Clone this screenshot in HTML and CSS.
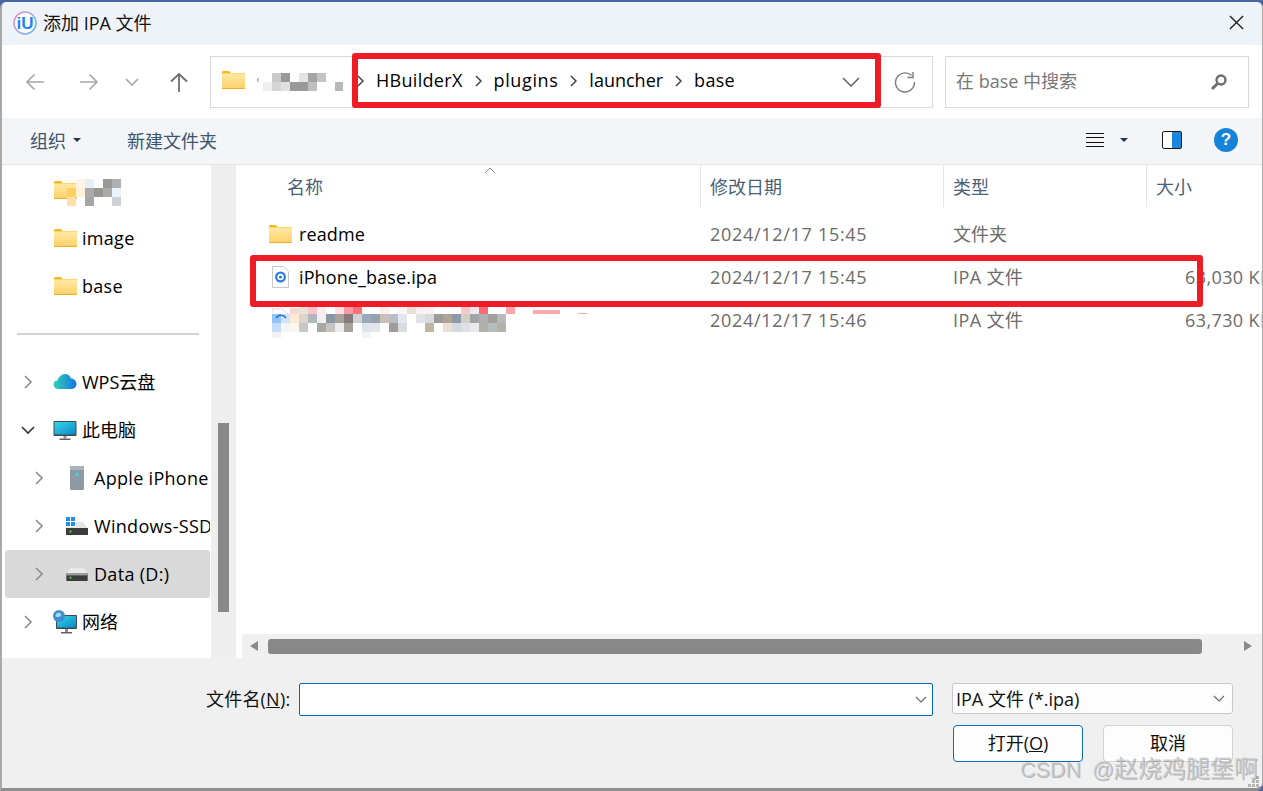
FILE: index.html
```html
<!DOCTYPE html>
<html lang="zh-CN">
<head>
<meta charset="utf-8">
<title>添加 IPA 文件</title>
<link rel="stylesheet" href="styles.css">
</head>
<body>
<svg class="defs" width="0" height="0" aria-hidden="true">
  <defs>
    <linearGradient id="fg" x1="0" y1="0" x2="0" y2="1"><stop offset="0" stop-color="#ffeaa6"/><stop offset="1" stop-color="#fdd068"/></linearGradient>
    <linearGradient id="cl" x1="0" y1="0" x2="1" y2="0"><stop offset="0" stop-color="#2fd4b4"/><stop offset="1" stop-color="#1673e6"/></linearGradient>
    <linearGradient id="sc" x1="0" y1="0" x2="1" y2="1"><stop offset="0" stop-color="#36d6ea"/><stop offset="1" stop-color="#0b8ac4"/></linearGradient>
    <linearGradient id="logoRing" x1="0" y1="0" x2="1" y2="1"><stop offset="0" stop-color="#f08aa8"/><stop offset=".5" stop-color="#a9a6f0"/><stop offset="1" stop-color="#5bb6f5"/></linearGradient>
    <symbol id="folder" viewBox="0 0 23 18">
      <path d="M0 1.5C0 .7.6 0 1.3 0h5.4l2.2 2H23v2H0z" fill="#f9b71c"/>
      <rect x="0" y="2.4" width="23" height="15.6" fill="url(#fg)"/>
      <rect x="0" y="17" width="23" height="1" fill="#efb02c"/>
    </symbol>
    <symbol id="chev" viewBox="0 0 10 16"><path d="M2 2l6 6-6 6" fill="none" stroke="#8f8f8f" stroke-width="1.7"/></symbol>
    <symbol id="crumbchev" viewBox="0 0 7 12"><path d="M1 1l5 5-5 5" fill="none" stroke="#444" stroke-width="1.500"/></symbol>
    <symbol id="drive" viewBox="0 0 23 14">
      <path d="M4 0h15l4 7H0z" fill="#e9e9e9"/>
      <rect x="0" y="6" width="23" height="8" fill="#3c3c3c"/>
      <rect x="0" y="6" width="23" height="2" fill="#9a9a9a"/>
      <rect x="3.5" y="9.5" width="2" height="2" fill="#3fe03f"/>
    </symbol>
  </defs>
</svg>

<main class="window">
  <header class="titlebar">
    <svg class="logo" viewBox="0 0 24 24" width="24" height="24"><circle cx="12" cy="12" r="11" fill="#fff" stroke="url(#logoRing)" stroke-width="1.6"/><text x="12" y="17.500" text-anchor="middle" class="logo-text">iU</text></svg>
    <span class="title">添加 IPA 文件</span>
    <svg class="close" viewBox="0 0 16 16" width="15" height="15"><path d="M1 1l14 14M15 1L1 15" stroke="#1a1a1a" stroke-width="1.4"/></svg>
  </header>

  <nav class="navbar">
    <div class="navbtns">
      <svg width="20" height="18" viewBox="0 0 20 18"><path d="M19 9H2M9.500 1.500L2 9l7.500 7.500" fill="none" stroke="#a6a6a6" stroke-width="1.700"/></svg>
      <svg width="20" height="18" viewBox="0 0 20 18"><path d="M1 9h17M10.500 1.500L18 9l-7.500 7.500" fill="none" stroke="#a6a6a6" stroke-width="1.700"/></svg>
      <svg width="14" height="8" viewBox="0 0 14 8"><path d="M1 1l6 6 6-6" fill="none" stroke="#a6a6a6" stroke-width="1.700"/></svg>
      <svg width="20" height="20" viewBox="0 0 20 20"><path d="M10 20V2M2 9.500L10 2l8 7.500" fill="none" stroke="#6e6e6e" stroke-width="1.800"/></svg>
    </div>
    <div class="address">
      <svg class="ficon" width="23" height="18"><use href="#folder"/></svg>
      <svg class="crumb-blur" width="90" height="22" viewBox="0 0 90 22">
        <path d="M2 9l-2 2 2 2" transform="translate(4 0)" fill="none" stroke="#888" stroke-width="1"/>
        <rect x="10" y="13" width="9" height="9" fill="#f0f0f0"/><rect x="19" y="4" width="9" height="9" fill="#c9c9c9"/><rect x="28" y="4" width="9" height="9" fill="#999"/><rect x="46" y="4" width="9" height="9" fill="#e4e4e4"/><rect x="55" y="4" width="9" height="9" fill="#a5a5a5"/><rect x="64" y="4" width="9" height="9" fill="#c4c4c4"/>
        <rect x="19" y="13" width="9" height="9" fill="#d5d5d5"/><rect x="28" y="13" width="9" height="9" fill="#e0e0e0"/><rect x="37" y="13" width="18" height="9" fill="#999"/><rect x="55" y="13" width="9" height="9" fill="#bfbfbf"/><rect x="82" y="13" width="8" height="9" fill="#b8b8b8"/>
      </svg>
      <ol class="crumbs">
        <li><svg class="crumb-chev" width="7" height="12"><use href="#crumbchev"/></svg></li>
        <li class="crumb">HBuilderX</li>
        <li><svg class="crumb-chev" width="7" height="12"><use href="#crumbchev"/></svg></li>
        <li class="crumb crumb-wide">plugins</li>
        <li><svg class="crumb-chev" width="7" height="12"><use href="#crumbchev"/></svg></li>
        <li class="crumb crumb-tight">launcher</li>
        <li><svg class="crumb-chev" width="7" height="12"><use href="#crumbchev"/></svg></li>
        <li class="crumb">base</li>
      </ol>
      <svg class="addr-drop" width="18" height="10" viewBox="0 0 18 10"><path d="M1 1l8 8 8-8" fill="none" stroke="#555" stroke-width="1.300"/></svg>
    </div>
    <div class="refresh">
      <svg width="22" height="22" viewBox="0 0 22 22"><path d="M17.500 4.500A9.500 9.500 0 1 0 20.500 11" fill="none" stroke="#7a7a7a" stroke-width="1.400"/><path d="M19 1v5.500h-5.500" fill="none" stroke="#7a7a7a" stroke-width="1.400"/></svg>
    </div>
    <div class="search">
      <span class="search-text">在 base 中搜索</span>
      <svg width="18" height="18" viewBox="0 0 18 18"><circle cx="11" cy="7" r="4.500" fill="none" stroke="#6e6e6e" stroke-width="2.400"/><path d="M7.500 10.500L2 16" stroke="#6e6e6e" stroke-width="3"/></svg>
    </div>
  </nav>

  <div class="toolbar">
    <button class="tool organize">组织<i class="caret"></i></button>
    <button class="tool newfolder">新建文件夹</button>
    <div class="toolicons">
      <span class="viewicon"><i></i><i></i><i></i><i></i></span>
      <i class="caret caret-view"></i>
      <span class="paneicon"></span>
      <span class="help">?</span>
    </div>
  </div>

  <div class="content">
    <aside class="sidebar">
      <div class="tree">
        <div class="item lv1b"><svg class="ficon" width="23" height="18"><use href="#folder"/></svg>
          <svg class="side-blur" width="54" height="27" viewBox="0 0 54 27">
            <rect x="9" width="9" height="9" fill="#fff5e6"/><rect x="18" width="9" height="9" fill="#e8eef6"/><rect x="36" width="9" height="9" fill="#999"/><rect x="45" width="9" height="9" fill="#b0b0b0"/>
            <rect y="9" x="0" width="9" height="9" fill="#ffcf60"/><rect y="9" x="9" width="9" height="9" fill="#fff2d8"/><rect y="9" x="18" width="9" height="9" fill="#aaa"/><rect y="9" x="27" width="9" height="9" fill="#999590"/><rect y="9" x="36" width="9" height="9" fill="#aaa"/><rect y="9" x="45" width="9" height="9" fill="#e9f5fd"/>
            <rect y="18" x="0" width="9" height="9" fill="#fce0a8"/><rect y="18" x="18" width="9" height="9" fill="#a5a5a5"/><rect y="18" x="45" width="9" height="9" fill="#cfd0d8"/>
          </svg>
        </div>
        <div class="item lv1b"><svg class="ficon" width="23" height="18"><use href="#folder"/></svg><span class="latin">image</span></div>
        <div class="item lv1b"><svg class="ficon" width="23" height="18"><use href="#folder"/></svg><span class="latin">base</span></div>
        <hr class="sep">
        <div class="item lv0"><svg class="tw" width="10" height="16"><use href="#chev"/></svg>
          <svg class="sicon" width="23" height="16" viewBox="0 0 23 16"><path d="M5 15c-3 0-5-2-5-4.500C0 8 2 6.500 4 6.500 5 3 8 0 11.500 0c3 0 5 2 6 4.500 3 0 5.500 2.500 5.500 5.500s-2.500 5-5.500 5z" fill="url(#cl)"/></svg>
          <span>WPS云盘</span></div>
        <div class="item lv0"><svg class="tw" width="14" height="9" viewBox="0 0 14 9"><path d="M1 1l6 6 6-6" fill="none" stroke="#333" stroke-width="1.600"/></svg>
          <svg class="sicon" width="23" height="19" viewBox="0 0 23 19"><rect width="23" height="15" rx="1" fill="#3d4a55"/><rect x="1" y="1" width="21" height="12.500" fill="url(#sc)"/><rect x="10" y="15" width="3" height="2.500" fill="#8a8f94"/><rect x="6" y="17.500" width="11" height="1.500" fill="#5c6268"/></svg>
          <span>此电脑</span></div>
        <div class="item lv1"><svg class="tw" width="10" height="16"><use href="#chev"/></svg>
          <svg class="sicon" width="22" height="24" viewBox="0 0 22 24"><rect x="4" y="0" width="14" height="24" rx="1.500" fill="#8d9aa5"/><rect x="4" y="0" width="14" height="4" fill="#aab4bc"/><rect x="9.500" y="7" width="3" height="3" fill="#34d6e8"/></svg>
          <span class="latin">Apple iPhone</span></div>
        <div class="item lv1"><svg class="tw" width="10" height="16"><use href="#chev"/></svg>
          <svg class="sicon" width="22" height="18" viewBox="0 0 22 18"><g fill="#1b8fe6"><rect x="0" y="0" width="4" height="4"/><rect x="5" y="0" width="4" height="4"/><rect x="0" y="5" width="4" height="4"/><rect x="5" y="5" width="4" height="4"/></g><path d="M10 5h7l5 6.500H0V10h10z" fill="#e6e6e6"/><rect x="0" y="11" width="22" height="7" fill="#3c3c3c"/><rect x="3.500" y="13.500" width="2" height="2" fill="#3fe03f"/></svg>
          <span class="latin">Windows-SSD</span></div>
        <div class="item lv1 selected"><svg class="tw" width="10" height="16"><use href="#chev"/></svg>
          <svg class="sicon" width="22" height="13"><use href="#drive"/></svg>
          <span class="latin">Data (D:)</span></div>
        <div class="item lv0"><svg class="tw" width="10" height="16"><use href="#chev"/></svg>
          <svg class="sicon" width="24" height="24" viewBox="0 0 24 24"><rect x="3" y="5" width="21" height="14" rx="1" fill="#3d4a55"/><rect x="4" y="6" width="19" height="11.500" fill="url(#sc)"/><rect x="12" y="19" width="3" height="3" fill="#8a8f94"/><rect x="8" y="22" width="11" height="1.500" fill="#5c6268"/><circle cx="6" cy="6" r="6" fill="#3f8fcf"/><path d="M3 4c2-2 4-1 5 0s-1 3-3 3-3 0-2-3z" fill="#a8d8f0"/></svg>
          <span>网络</span></div>
      </div>
    </aside>
    <div class="sidegutter"><div class="sidethumb"></div></div>
    <section class="pane">
      <div class="list">
        <div class="cols">
          <div class="col col-name">名称<svg class="sort" width="12" height="7" viewBox="0 0 12 7"><path d="M1 6l5-5 5 5" fill="none" stroke="#8a8a8a" stroke-width="1"/></svg></div>
          <div class="col">修改日期</div>
          <div class="col">类型</div>
          <div class="col">大小</div>
        </div>
        <div class="row">
          <div class="cell-name"><svg class="ficon" width="23" height="18"><use href="#folder"/></svg><span>readme</span></div>
          <div class="cell date">2024/12/17 15:45</div><div class="cell">文件夹</div><div class="cell"></div>
        </div>
        <div class="row">
          <div class="cell-name">
            <svg class="ficon" width="23" height="22" viewBox="0 0 23 22"><path d="M3.500.5h11l5 5v16h-16z" fill="#fff" stroke="#c8c8c8"/><circle cx="11.500" cy="11" r="5.500" fill="#2b7fe0"/><circle cx="11.500" cy="11" r="3.200" fill="#fff"/><circle cx="11.500" cy="11" r="1.600" fill="#2b7fe0"/></svg>
            <span>iPhone_base.ipa</span></div>
          <div class="cell date">2024/12/17 15:45</div><div class="cell kind">IPA 文件</div><div class="cell size">63,030 KB</div>
        </div>
        <div class="row">
          <div class="cell-name">
            <svg class="file-blur" width="330" height="36" viewBox="0 0 330 36">
              <path d="M0 9V4h10l6 5" fill="none" stroke="#d8d8d8"/>
              <g>
                <rect x="18" y="3" width="9" height="6" fill="#f5d9d2"/><rect x="27" y="0" width="9" height="9" fill="#e8e4dc"/><rect x="36" y="0" width="9" height="9" fill="#fbc5c8"/><rect x="45" y="0" width="9" height="9" fill="#fdeeee"/><rect x="63" y="0" width="9" height="9" fill="#fde0e2"/><rect x="72" y="0" width="9" height="9" fill="#fa9aa0"/><rect x="81" y="0" width="9" height="9" fill="#f87078"/><rect x="108" y="0" width="9" height="9" fill="#fdeef0"/><rect x="126" y="0" width="9" height="9" fill="#fdf4f4"/><rect x="135" y="0" width="9" height="9" fill="#e9e0da"/><rect x="144" y="0" width="9" height="9" fill="#fdeef0"/><rect x="153" y="0" width="9" height="9" fill="#fdf0f0"/><rect x="189" y="0" width="9" height="9" fill="#fcc6ca"/><rect x="198" y="0" width="9" height="9" fill="#ebebeb"/><rect x="207" y="0" width="9" height="9" fill="#f76c74"/><rect x="234" y="0" width="9" height="9" fill="#fba6ac"/>
                <rect x="261" y="5" width="27" height="4" fill="#f9a8ae"/><rect x="306" y="8" width="9" height="1" fill="#f9a8ae"/>
              </g>
              <g>
                <rect x="0" y="9" width="9" height="9" fill="#93c4f8"/><rect x="9" y="9" width="9" height="9" fill="#d0e2f8"/><rect x="18" y="9" width="9" height="9" fill="#fdebd6"/><rect x="27" y="9" width="9" height="9" fill="#ddd5c9"/><rect x="36" y="9" width="9" height="9" fill="#b0b8be"/><rect x="45" y="9" width="9" height="9" fill="#eef0f2"/><rect x="54" y="9" width="9" height="9" fill="#8b97a3"/><rect x="63" y="9" width="9" height="9" fill="#a5a29c"/><rect x="72" y="9" width="9" height="9" fill="#877a7a"/><rect x="81" y="9" width="9" height="9" fill="#cfd2d5"/><rect x="90" y="9" width="9" height="9" fill="#9aaab8"/><rect x="99" y="9" width="9" height="9" fill="#96a3b0"/><rect x="108" y="9" width="9" height="9" fill="#c9c0b8"/><rect x="117" y="9" width="9" height="9" fill="#b9bec6"/><rect x="126" y="9" width="9" height="9" fill="#e2e8f0"/><rect x="144" y="9" width="9" height="9" fill="#dfe3e8"/><rect x="153" y="9" width="9" height="9" fill="#d8dadd"/><rect x="162" y="9" width="9" height="9" fill="#9b9b9b"/><rect x="171" y="9" width="9" height="9" fill="#b0a498"/><rect x="180" y="9" width="9" height="9" fill="#8f9aa8"/><rect x="189" y="9" width="9" height="9" fill="#d2cfc9"/><rect x="198" y="9" width="9" height="9" fill="#a0a4a6"/><rect x="207" y="9" width="9" height="9" fill="#b0b0b2"/><rect x="216" y="9" width="9" height="9" fill="#a3a09c"/><rect x="225" y="9" width="9" height="9" fill="#b6babd"/>
              </g>
              <g>
                <rect x="0" y="18" width="9" height="9" fill="#c4ddfa"/><rect x="9" y="18" width="9" height="9" fill="#f4f4f4"/><rect x="18" y="18" width="9" height="9" fill="#fdf6ee"/><rect x="27" y="18" width="9" height="9" fill="#c6c8c6"/><rect x="45" y="18" width="9" height="9" fill="#a9a8a5"/><rect x="54" y="18" width="9" height="9" fill="#c6c2c0"/><rect x="63" y="18" width="9" height="9" fill="#ececea"/><rect x="72" y="18" width="9" height="9" fill="#a7a39c"/><rect x="90" y="18" width="9" height="9" fill="#dfe4ea"/><rect x="99" y="18" width="9" height="9" fill="#e2e5e8"/><rect x="117" y="18" width="9" height="9" fill="#a09c9c"/><rect x="126" y="18" width="9" height="9" fill="#d9dcde"/><rect x="153" y="18" width="9" height="9" fill="#bfb5a4"/><rect x="171" y="18" width="9" height="9" fill="#ecdfd6"/><rect x="180" y="18" width="9" height="9" fill="#d4d9de"/><rect x="189" y="18" width="9" height="9" fill="#dde1e5"/><rect x="198" y="18" width="9" height="9" fill="#eaeaea"/><rect x="207" y="18" width="9" height="9" fill="#b2b0aa"/><rect x="216" y="18" width="9" height="9" fill="#b4bcbf"/><rect x="225" y="18" width="9" height="9" fill="#b6b0aa"/>
                <rect x="0" y="27" width="9" height="6" fill="#f2f2f2"/><rect x="90" y="27" width="9" height="6" fill="#f0f4f8"/>
              </g>
              <path d="M4 13a6 6 0 0 1 10 0" fill="none" stroke="#1b6fe0" stroke-width="1.500"/>
            </svg>
          </div>
          <div class="cell date">2024/12/17 15:46</div><div class="cell kind">IPA 文件</div><div class="cell size">63,730 KB</div>
        </div>
      </div>
      <div class="hscroll">
        <i class="arrow arrow-l"></i>
        <div class="hthumb"></div>
        <i class="arrow arrow-r"></i>
      </div>
    </section>
  </div>

  <footer class="footer">
    <div class="filerow">
      <label class="fname-label" for="fname">文件名(<u>N</u>):</label>
      <div class="fname"><input id="fname" class="fname-input" type="text"><svg width="12" height="7" viewBox="0 0 12 7"><path d="M1 1l5 5 5-5" fill="none" stroke="#666" stroke-width="1.100"/></svg></div>
      <div class="filter"><span class="filter-text">IPA 文件 (*.ipa)</span><svg width="12" height="7" viewBox="0 0 12 7"><path d="M1 1l5 5 5-5" fill="none" stroke="#666" stroke-width="1.100"/></svg></div>
    </div>
    <div class="btnrow">
      <button class="btn primary">打开(<u>O</u>)</button>
      <button class="btn">取消</button>
    </div>
    <svg class="grip" width="12" height="12" viewBox="0 0 12 12"><g fill="#b5b5b5"><rect x="8" y="0" width="3" height="3"/><rect x="4" y="4" width="3" height="3"/><rect x="8" y="4" width="3" height="3"/><rect x="0" y="8" width="3" height="3"/><rect x="4" y="8" width="3" height="3"/><rect x="8" y="8" width="3" height="3"/></g></svg>
  </footer>
</main>

<div class="mark mark-path"></div>
<div class="mark mark-file"></div>
<div class="watermark"><span class="wm-latin">CSDN @</span>赵烧鸡腿堡啊</div>
</body>
</html>
```
FILE: styles.css
```css
* { box-sizing: border-box; }
html, body { margin: 0; padding: 0; height: 100%; overflow: hidden; }
body {
  position: relative;
  width: 1263px;
  height: 791px;
  background: #4a66a3;
  padding-top: 2px;
  font-family: "Open Sans", "Noto Sans CJK SC", sans-serif;
  font-size: 18px;
  color: #111;
}
.defs { position: absolute; }
.window {
  width: 1263px;
  height: 789px;
  display: flex;
  flex-direction: column;
  border-left: 2px solid #a9a9a9;
  border-right: 1px solid #a9a9a9;
  border-bottom: 3px solid #8f8f8f;
  border-radius: 6px 6px 8px 0;
  overflow: hidden;
  background: #f0f0f0;
}
.titlebar {
  height: 43px;
  flex: none;
  display: flex;
  align-items: center;
  padding: 0 18px 2px 11px;
  background: #eef3f8;
}
.logo { flex: none; margin-right: 6px; }
.logo-text { font: 700 17px "Liberation Sans", sans-serif; fill: #1d86f0; }
.title { font-size: 18px; line-height: 24px; flex: 1; }
.close { flex: none; margin-bottom: 1px; }

.navbar {
  height: 73px;
  flex: none;
  display: flex;
  align-items: center;
  background: #fff;
}
.navbtns {
  width: 208px;
  flex: none;
  display: flex;
  align-items: center;
  padding-left: 23px;
}
.navbtns svg:nth-child(1) { margin-right: 34px; }
.navbtns svg:nth-child(2) { margin-right: 26px; }
.navbtns svg:nth-child(3) { margin-right: 30px; }
.address {
  width: 722px;
  height: 52px;
  flex: none;
  display: flex;
  align-items: center;
  border: 1px solid #d9d9d9;
  border-right: 0;
  padding-left: 11px;
}
.address .ficon { flex: none; margin-right: 2px; margin-top: -4px; }
.crumb-blur { flex: none; margin: -4px 14px 0 6px; }
.crumbs { list-style: none; margin: -3px 0 0; padding: 0; display: flex; align-items: center; gap: 12px; flex: 1; }
.crumbs li { display: flex; align-items: center; line-height: 24px; }
.crumb { color: #000; white-space: nowrap; letter-spacing: .3px; }
.crumbs .crumb-wide { letter-spacing: .6px; }
.crumbs .crumb-tight { letter-spacing: 0; }
.crumb-chev { display: block; margin-top: 2px; }
.addr-drop { flex: none; margin-right: 72px; }
.refresh {
  width: 1px; height: 52px; flex: none;
  border-right: 1px solid #d9d9d9;
  border-top: 1px solid #d9d9d9;
  border-bottom: 1px solid #d9d9d9;
  display: flex;
  align-items: center;
  justify-content: flex-end;
}
.refresh svg { flex: none; margin-right: 16px; }
.search {
  margin-left: 12px;
  width: 304px;
  height: 52px;
  flex: none;
  display: flex;
  align-items: center;
  justify-content: space-between;
  border: 1px solid #d9d9d9;
  padding: 0 20px 0 10px;
  color: #777;
}
.search-text { font-size: 18px; margin-top: -3px; }

.toolbar {
  height: 47px;
  flex: none;
  display: flex;
  align-items: center;
  background: #f3f5f7;
  border-bottom: 1px solid #e5e5e5;
  padding: 0 0 2px 28px;
}
.tool {
  border: 0; background: none; padding: 0;
  font: inherit; font-size: 18px; color: #3d5470;
  display: flex; align-items: center;
}
.organize { margin-right: 46px; }
.caret {
  display: inline-block;
  width: 0; height: 0;
  border-left: 4px solid transparent;
  border-right: 4px solid transparent;
  border-top: 4px solid #23364f;
  margin-left: 7px;
}
.toolicons { margin-left: auto; display: flex; align-items: center; padding-right: 24px; }
.viewicon { width: 18px; height: 15px; display: flex; flex-direction: column; justify-content: space-between; }
.viewicon i { display: block; height: 1px; background: #111; }
.caret-view { margin-left: 16px; margin-right: 34px; }
.paneicon {
  width: 20px; height: 18px;
  border: 1.500px solid #1a1a1a;
  border-radius: 2px;
  background: linear-gradient(90deg, #fff 50%, #1787dd 50%);
  margin-right: 32px;
}
.help {
  width: 24px; height: 24px; border-radius: 50%;
  background: #1483d8;
  color: #fff; font: 700 17px/24px "Liberation Sans", sans-serif; text-align: center;
}

.content { height: 493px; flex: none; display: flex; background: #fff; }
.sidebar { width: 209px; flex: none; overflow: hidden; background: #fff; padding: 1px 1px 0 3px; }
.tree { display: flex; flex-direction: column; }
.item {
  height: 48px;
  flex: none;
  display: flex;
  align-items: center;
  white-space: nowrap;
  overflow: hidden;
  border-radius: 3px;
}
.item span { color: #000; }
.item .latin { letter-spacing: .3px; }
.lv1b { padding-left: 49px; }
.lv1b .ficon { margin-right: 5px; flex: none; }
.side-blur { flex: none; margin-left: -15px; margin-top: 5px; }
.lv0 { padding-left: 16px; }
.lv0 .tw { flex: none; width: 14px; margin-right: 18px; }
.lv1 { padding-left: 27px; }
.lv1 .tw { flex: none; width: 14px; margin-right: 20px; }
.lv0 .sicon { flex: none; width: 24px; margin-right: 5px; }
.lv0 span { margin-top: -2px; }
.lv1 .sicon { flex: none; margin-right: 6px; }
.selected { background: #d9d9d9; }
.sep { height: 2px; border: 0; width: 182px; background: #d3d3d3; align-self: flex-start; margin: 23px 0 23px 12px; }
.sidegutter { width: 25px; flex: none; background: #eee; padding: 258px 7px 0; }
.sidethumb { width: 11px; height: 189px; background: #888; }
.pane { flex: 1; min-width: 0; display: flex; flex-direction: column; background: #fff; border-left: 4px solid #fff; overflow: hidden; }
.list { flex: 1; min-height: 0; }
.cols {
  height: 47px;
  display: grid;
  grid-template-columns: 460px 243px 203px 200px;
  align-items: start;
}
.col {
  height: 42px;
  font-size: 18px; color: #4c5f78;
  padding: 10px 0 0 9px;
  border-left: 1px solid #e5e5e5;
  line-height: 24px;
  position: relative;
}
.col-name { border-left: 0; padding-left: 47px; }
.sort { position: absolute; left: 244px; top: 2px; }
.row {
  height: 43px;
  display: grid;
  grid-template-columns: 460px 243px 203px 200px;
  align-items: center;
  color: #6b6b6b;
  line-height: 24px;
  white-space: nowrap;
}
.cell { padding-left: 10px; }
.date { letter-spacing: .7px; }
.kind { letter-spacing: .4px; }
.cell-name { display: flex; align-items: center; padding-left: 29px; color: #000; position: relative; letter-spacing: .12px; }
.cell-name .ficon { flex: none; margin-right: 7px; }
.file-blur { position: absolute; left: 32px; top: -15px; }
.size { padding-left: 39px; letter-spacing: .4px; }
.hscroll {
  height: 24px;
  flex: none;
  display: flex;
  align-items: center;
  background: #f0f0f0;
  margin-left: 2px;
  padding: 0 10px 0 8px;
}
.arrow { width: 0; height: 0; border-top: 5px solid transparent; border-bottom: 5px solid transparent; flex: none; }
.arrow-l { border-right: 8px solid #8a8a8a; margin-right: 10px; }
.arrow-r { border-left: 8px solid #8a8a8a; margin-left: auto; }
.hthumb { width: 934px; height: 15px; background: #888; border-radius: 3px; flex: none; }

.footer { flex: 1; background: #f0f0f0; padding: 25px 28px 0 0; display: flex; flex-direction: column; position: relative; }
.filerow { display: flex; align-items: flex-start; }
.fname-label { margin-left: 204px; width: 93px; line-height: 33px; flex: none; white-space: nowrap; letter-spacing: .2px; }
.fname {
  width: 634px; height: 33px; flex: none;
  display: flex; align-items: center;
  background: #fff;
  border: 1px solid #0067c0;
  border-radius: 2px;
  padding-right: 5px;
}
.fname-input { flex: 1; min-width: 0; border: 0; outline: 0; background: none; height: 100%; }
.filter {
  margin-left: 19px;
  width: 281px; height: 31px; flex: none;
  display: flex; align-items: center; justify-content: space-between;
  background: #fdfdfd;
  border: 1px solid #c8c8c8;
  border-radius: 3px;
  padding: 0 7px 0 3px;
}
.filter-text { margin-top: -2px; }
.btnrow { display: flex; justify-content: flex-end; gap: 20px; margin: 9px 1px 0 0; }
.btn {
  width: 130px; height: 37px;
  background: #fdfdfd;
  border: 1px solid #d2d2d2;
  border-radius: 4px;
  font: inherit; color: #111;
  padding: 0 0 3px;
}
.primary { border-color: #0f6cbd; }
.grip { position: absolute; right: 2px; bottom: 0; }

.mark { position: absolute; border: 6px solid #ee1c25; border-radius: 3px; }
.mark-path { left: 352px; top: 53px; width: 529px; height: 55px; }
.mark-file { left: 250px; top: 255px; width: 953px; height: 52px; }
.watermark {
  position: absolute;
  left: 1020px; top: 754px;
  font-family: "Liberation Sans", "Noto Sans CJK SC", sans-serif;
  font-size: 24px;
  line-height: 30px;
  white-space: nowrap;
  color: rgba(200, 200, 200, .7);
  text-shadow: 1px 1px 0 rgba(110, 110, 110, .45);
}
.wm-latin { font-size: 21.500px; word-spacing: 5px; }
```
